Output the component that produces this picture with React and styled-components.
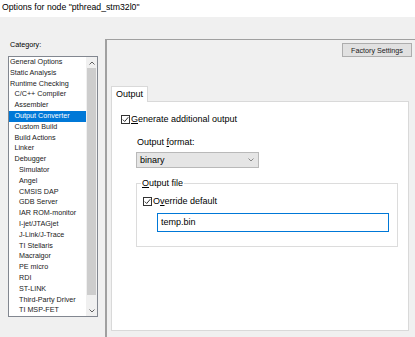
import React from "react";
import styled, { createGlobalStyle } from "styled-components";

const GlobalStyle = createGlobalStyle`
  html, body {
    margin: 0;
    padding: 0;
    background: #f0f0f0;
  }
  body {
    font-family: "Liberation Sans", Arial, sans-serif;
    color: #000;
  }
`;

const Window = styled.div`
  width: 415px;
  height: 337px;
  overflow: hidden;
  background: #f0f0f0;
  display: flex;
  flex-direction: column;
`;

const TitleBar = styled.div`
  height: 17px;
  flex-shrink: 0;
  background: #fff;
  font-size: 8.7px;
  line-height: 14px;
  padding-left: 2px;
  white-space: nowrap;
`;

const Main = styled.div`
  flex: 1;
  display: flex;
  min-height: 0;
`;

const LeftColumn = styled.div`
  width: 105px;
  flex-shrink: 0;
  box-sizing: border-box;
  padding: 23px 7px 0 8px;
  display: flex;
  flex-direction: column;
`;

const SmallLabel = styled.div`
  font-size: 7.2px;
  line-height: 10px;
  padding-left: 2px;
  margin-bottom: 6px;
`;

const ListBox = styled.div`
  width: 90px;
  height: 261px;
  box-sizing: border-box;
  border: 1px solid #828790;
  background: #fff;
  display: flex;
`;

const Items = styled.div`
  flex: 1;
  overflow: hidden;
`;

const Item = styled.div`
  font-size: 7.2px;
  line-height: 10.8px;
  height: 10.8px;
  white-space: nowrap;
  padding-left: ${(p) => 1 + p.$level * 4.5}px;
  background: ${(p) => (p.$selected ? "#0078d7" : "transparent")};
  color: ${(p) => (p.$selected ? "#fff" : "#1a1a1a")};
`;

const ScrollBar = styled.div`
  width: 11px;
  flex-shrink: 0;
  display: flex;
  flex-direction: column;
  background: #f0f0f0;
`;

const ScrollArrow = styled.div`
  height: 11px;
  flex-shrink: 0;
  display: flex;
  align-items: center;
  justify-content: center;
  background: #f0f0f0;
`;

const ScrollThumb = styled.div`
  flex: 1;
  margin: 0 1px;
  background: #cdcdcd;
`;

const ScrollTrack = styled.div`
  height: 10px;
  flex-shrink: 0;
`;

const Frame = styled.div`
  flex: 1;
  margin-top: 22px;
  border-left: 2px solid #a0a0a0;
  border-top: 1px solid #a0a0a0;
  display: flex;
  flex-direction: column;
  min-width: 0;
`;

const ButtonRow = styled.div`
  display: flex;
  justify-content: flex-end;
  padding: 3px 3px 0 0;
`;

const Button = styled.button`
  width: 70px;
  height: 14px;
  padding: 0;
  font-family: inherit;
  font-size: 7.2px;
  color: #222;
  background: #e1e1e1;
  border: 1px solid #adadad;
  border-radius: 0;
`;

const TabArea = styled.div`
  margin-top: 29px;
  padding: 0 6px 0 4px;
  display: flex;
  flex-direction: column;
`;

const TabStrip = styled.div`
  display: flex;
`;

const Tab = styled.div`
  width: 37px;
  height: 16px;
  box-sizing: border-box;
  border: 1px solid #d9d9d9;
  border-bottom: none;
  background: #fff;
  font-size: 9px;
  line-height: 15px;
  padding-left: 4px;
  margin-bottom: -1px;
  position: relative;
  z-index: 1;
`;

const Panel = styled.div`
  height: 230px;
  box-sizing: border-box;
  border: 1px solid #d9d9d9;
  background: #fff;
  padding: 12px 0 0 9px;
  font-size: 9px;
`;

const CheckRow = styled.label`
  display: flex;
  align-items: center;
  gap: 1px;
  line-height: 11px;
  height: 11px;
  white-space: nowrap;
`;

const Box = styled.span`
  width: 9px;
  height: 9px;
  box-sizing: border-box;
  border: 1px solid #333;
  background: #fff;
  display: flex;
  align-items: center;
  justify-content: center;
  flex-shrink: 0;
`;

const Indented = styled.div`
  padding-left: 15px;
  margin-top: 12px;
  display: flex;
  flex-direction: column;
  align-items: flex-start;
`;

const FieldLabel = styled.div`
  line-height: 11px;
  padding-left: 1px;
`;

const Select = styled.div`
  margin-top: 3.5px;
  width: 123px;
  height: 16px;
  box-sizing: border-box;
  border: 1px solid #b9b9b9;
  background: #e5e5e5;
  display: flex;
  align-items: center;
  justify-content: space-between;
  padding: 0 4px 0 3px;
`;

const GroupBox = styled.fieldset`
  margin: 10px 0 0 0;
  width: 262px;
  box-sizing: border-box;
  border: 1px solid #dcdcdc;
  padding: 7px 8px 14px 6px;
  min-width: 0;
`;

const Legend = styled.legend`
  padding: 0 1px;
  margin-left: -2px;
  line-height: 11px;
  font-size: 9px;
`;

const TextInput = styled.div`
  margin: 6.5px 0 0 14px;
  width: 232px;
  height: 19px;
  box-sizing: border-box;
  border: 1px solid #0078d7;
  padding-left: 3px;
  line-height: 17px;
`;

const Check = () => (
  <Box>
    <svg width="7" height="7" viewBox="0 0 7 7">
      <path d="M0.8 3.6 L2.7 5.5 L6.3 1.2" fill="none" stroke="#333" strokeWidth="1" />
    </svg>
  </Box>
);

const Chevron = ({ up, color = "#606060" }) => (
  <svg width="6" height="4" viewBox="0 0 6 4">
    <path
      d={up ? "M0.5 3.5 L3 1 L5.5 3.5" : "M0.5 0.5 L3 3 L5.5 0.5"}
      fill="none"
      stroke={color}
      strokeWidth="1"
    />
  </svg>
);

const categories = [
  ["General Options", 0],
  ["Static Analysis", 0],
  ["Runtime Checking", 0],
  ["C/C++ Compiler", 1],
  ["Assembler", 1],
  ["Output Converter", 1],
  ["Custom Build", 1],
  ["Build Actions", 1],
  ["Linker", 1],
  ["Debugger", 1],
  ["Simulator", 2],
  ["Angel", 2],
  ["CMSIS DAP", 2],
  ["GDB Server", 2],
  ["IAR ROM-monitor", 2],
  ["I-jet/JTAGjet", 2],
  ["J-Link/J-Trace", 2],
  ["TI Stellaris", 2],
  ["Macraigor", 2],
  ["PE micro", 2],
  ["RDI", 2],
  ["ST-LINK", 2],
  ["Third-Party Driver", 2],
  ["TI MSP-FET", 2],
];

export default function App() {
  return (
    <Window>
      <GlobalStyle />
      <TitleBar>Options for node "pthread_stm32l0"</TitleBar>
      <Main>
        <LeftColumn>
          <SmallLabel>Category:</SmallLabel>
          <ListBox>
            <Items>
              {categories.map(([name, level]) => (
                <Item key={name} $level={level} $selected={name === "Output Converter"}>
                  {name}
                </Item>
              ))}
            </Items>
            <ScrollBar>
              <ScrollArrow>
                <Chevron up />
              </ScrollArrow>
              <ScrollThumb />
              <ScrollTrack />
              <ScrollArrow>
                <Chevron />
              </ScrollArrow>
            </ScrollBar>
          </ListBox>
        </LeftColumn>
        <Frame>
          <ButtonRow>
            <Button>Factory Settings</Button>
          </ButtonRow>
          <TabArea>
            <TabStrip>
              <Tab>Output</Tab>
            </TabStrip>
            <Panel>
              <CheckRow>
                <Check />
                <span>
                  <u>G</u>enerate additional output
                </span>
              </CheckRow>
              <Indented>
                <FieldLabel>
                  Output <u>f</u>ormat:
                </FieldLabel>
                <Select>
                  <span>binary</span>
                  <Chevron color="#888" />
                </Select>
                <GroupBox>
                  <Legend>
                    <u>O</u>utput file
                  </Legend>
                  <CheckRow>
                    <Check />
                    <span>
                      O<u>v</u>erride default
                    </span>
                  </CheckRow>
                  <TextInput>temp.bin</TextInput>
                </GroupBox>
              </Indented>
            </Panel>
          </TabArea>
        </Frame>
      </Main>
    </Window>
  );
}
